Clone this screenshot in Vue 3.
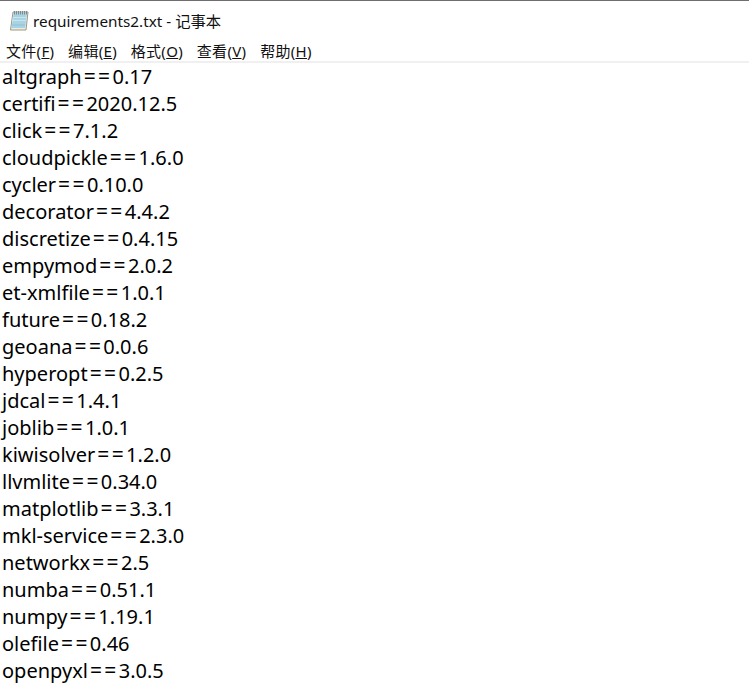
<script setup>
const raw = ['altgraph==0.17','certifi==2020.12.5','click==7.1.2','cloudpickle==1.6.0','cycler==0.10.0','decorator==4.4.2','discretize==0.4.15','empymod==2.0.2','et-xmlfile==1.0.1','future==0.18.2','geoana==0.0.6','hyperopt==0.2.5','jdcal==1.4.1','joblib==1.0.1','kiwisolver==1.2.0','llvmlite==0.34.0','matplotlib==3.3.1','mkl-service==2.3.0','networkx==2.5','numba==0.51.1','numpy==1.19.1','olefile==0.46','openpyxl==3.0.5']
const lines = raw.map(l => l.split('=='))
const menus = [['文件(','F',')'],['编辑(','E',')'],['格式(','O',')'],['查看(','V',')'],['帮助(','H',')']]
</script>

<template>
  <div class="win">
    <div class="title">
      <svg class="icon" width="20" height="21" viewBox="0 0 20 21">
        <path d="M4 2 L19 2 L17 20 L1.5 20 Z" fill="#f0ead8" stroke="#9a9a8c" stroke-width="1"/>
        <path d="M4.5 3 L18 3 L16 18 L2.5 18 Z" fill="#a6d4e6"/>
        <path d="M4 7 L17.5 7 L16.5 13 L3 13 Z" fill="#c6e6f0"/>
        <path d="M4.3 9H17M3.8 12H16.6M3.4 15H16.2" stroke="#8fc0d4" stroke-width="1"/>
        <path d="M5.5 1V4.5M7.5 1V4.5M9.5 1V4.5M11.5 1V4.5M13.5 1V4.5M15.5 1V4.5M17.5 1V4.5" stroke="#7d8a92" stroke-width="1"/>
      </svg>
      <span>requirements2.txt - 记事本</span>
    </div>
    <div class="menu">
      <span v-for="m in menus" :key="m[0]" class="item">{{ m[0] }}<u>{{ m[1] }}</u>{{ m[2] }}</span>
    </div>
    <div class="text">
      <div v-for="l in lines" :key="l[0]" class="line">{{ l[0] }}<span class="eq">==</span>{{ l[1] }}</div>
    </div>
  </div>
</template>

<style scoped>
.win { width: 749px; height: 685px; overflow: hidden; background: #fff; color: #000; display: flex; flex-direction: column; font-family: "Noto Sans", "Noto Sans CJK SC", sans-serif; border-top: 1px solid #6e6e6e; box-sizing: border-box; }
.title { height: 38px; display: flex; align-items: center; padding-left: 9px; gap: 4px; font-size: 15.3px; color: #111; flex: none; }
.icon { flex: none; }
.menu { height: 22px; display: flex; align-items: center; padding-left: 6px; gap: 13.8px; font-size: 15px; letter-spacing: 0.3px; color: #111; border-bottom: 2px solid #f0f0f0; flex: none; box-sizing: content-box; }
.text { padding: 0 0 0 2px; font-size: 20px; }
.line { height: 27px; line-height: 27px; white-space: nowrap; }
.eq { font-size: 21px; line-height: 0; letter-spacing: 2.4px; margin-left: 2px; }
</style>
